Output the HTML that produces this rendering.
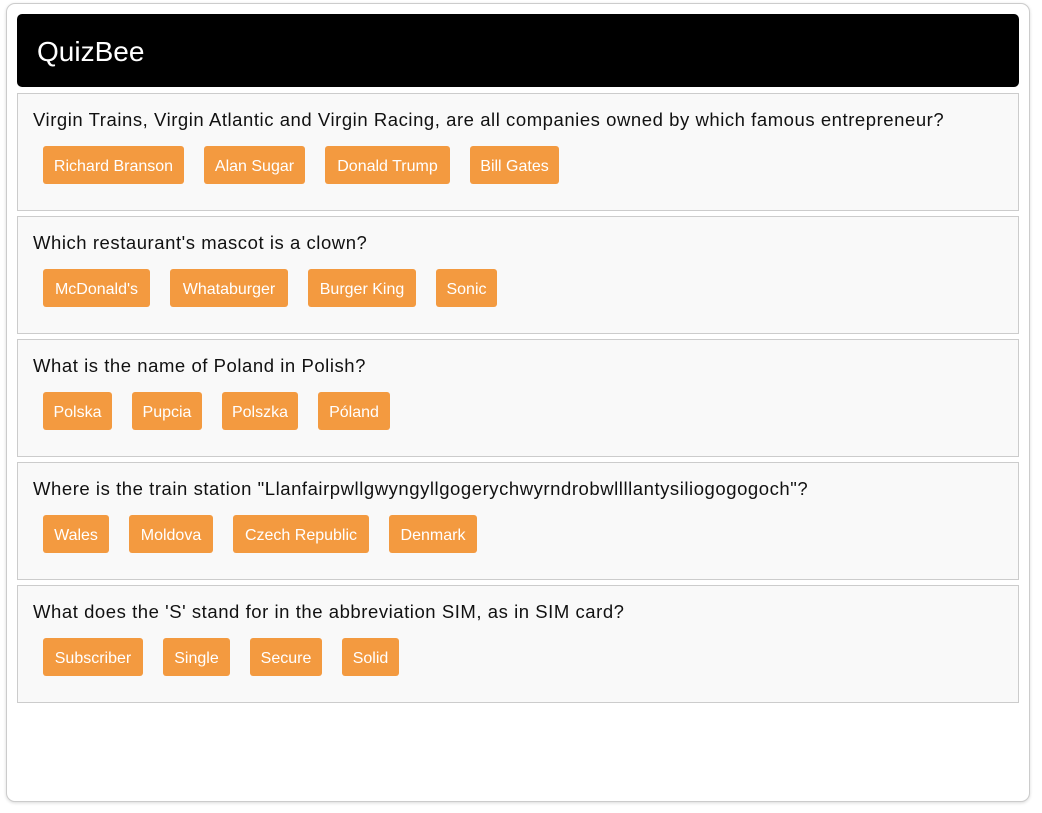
<!DOCTYPE html>
<html><head><meta charset="utf-8"><style>
*{box-sizing:border-box;margin:0;padding:0}
body{width:1042px;height:813px;background:#fff;font-family:"Liberation Sans",sans-serif;position:relative;overflow:hidden}
.outer{position:absolute;left:6px;top:3px;width:1024px;height:799px;border:1px solid #ccc;border-radius:9px;box-shadow:0 1px 3px rgba(0,0,0,.15);background:#fff}
.hdr{position:absolute;left:17px;top:14px;width:1002px;height:73px;background:#000;border-radius:5px;color:#fff;font-size:28px;line-height:75px;padding-left:20px}
.q{position:absolute;left:17px;width:1002px;height:118px;background:#f9f9f9;border:1px solid #ccc}
.q p{position:absolute;left:15px;top:15px;font-size:18.5px;letter-spacing:0.55px;color:#111;white-space:nowrap}
.bs{position:absolute;left:25px;top:52px;height:38px;display:flex}
.b{height:38px;background:#f39a40;color:#fff;border-radius:3px;font-size:16px;line-height:41px;text-align:center;margin-right:20px;white-space:nowrap}
</style></head><body>
<div class="outer"></div>
<div class="hdr">QuizBee</div>
<div class="q" style="top:93px"><p>Virgin Trains, Virgin Atlantic and Virgin Racing, are all companies owned by which famous entrepreneur?</p>
<div class="bs"><div class="b" style="width:141px">Richard Branson</div><div class="b" style="width:101px">Alan Sugar</div><div class="b" style="width:125px">Donald Trump</div><div class="b" style="width:89px">Bill Gates</div></div></div>
<div class="q" style="top:216px"><p>Which restaurant's mascot is a clown?</p>
<div class="bs"><div class="b" style="width:107px">McDonald's</div><div class="b" style="width:118px">Whataburger</div><div class="b" style="width:108px">Burger King</div><div class="b" style="width:61px">Sonic</div></div></div>
<div class="q" style="top:339px"><p>What is the name of Poland in Polish?</p>
<div class="bs"><div class="b" style="width:69px">Polska</div><div class="b" style="width:70px">Pupcia</div><div class="b" style="width:76px">Polszka</div><div class="b" style="width:72px">Póland</div></div></div>
<div class="q" style="top:462px"><p>Where is the train station "Llanfairpwllgwyngyllgogerychwyrndrobwllllantysiliogogogoch"?</p>
<div class="bs"><div class="b" style="width:66px">Wales</div><div class="b" style="width:84px">Moldova</div><div class="b" style="width:136px">Czech Republic</div><div class="b" style="width:88px">Denmark</div></div></div>
<div class="q" style="top:585px"><p>What does the 'S' stand for in the abbreviation SIM, as in SIM card?</p>
<div class="bs"><div class="b" style="width:100px">Subscriber</div><div class="b" style="width:67px">Single</div><div class="b" style="width:72px">Secure</div><div class="b" style="width:57px">Solid</div></div></div>
</body></html>
